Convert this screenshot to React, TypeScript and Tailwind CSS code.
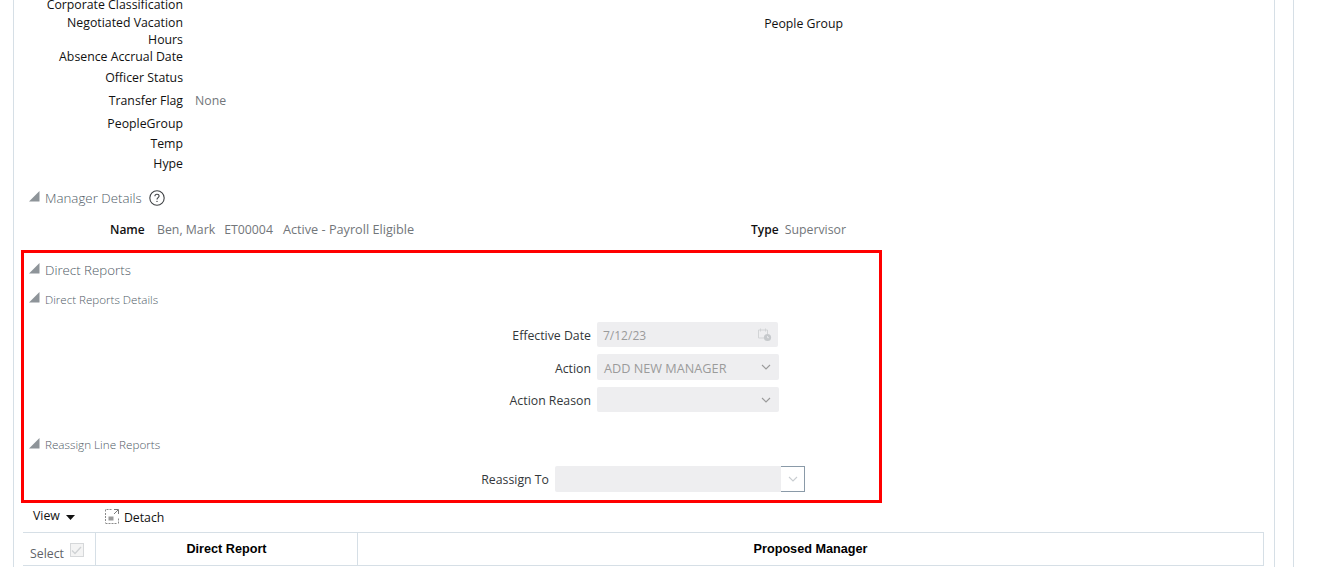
import React from "react";

const font = { fontFamily: '"Open Sans", "Noto Sans", sans-serif' };

function Tri() {
  return (
    <svg width="11" height="11" viewBox="0 0 11 11" className="shrink-0">
      <polygon points="0,10.5 10.5,10.5 10.5,0" fill="#8e9499" />
    </svg>
  );
}

function Chevron({ color = "#9a9a9a" }: { color?: string }) {
  return (
    <svg width="10" height="6" viewBox="0 0 10 6" fill="none">
      <path d="M1 1l4 4 4-4" stroke={color} strokeWidth="1.1" />
    </svg>
  );
}

function FormRow({ label, value, h, extra = "" }: { label: string; value?: string; h: string; extra?: string }) {
  return (
    <div className={`flex items-center ${h} ${extra}`}>
      <div className="w-[169px] text-right text-[12.3px] leading-[17px] text-[#111]">{label}</div>
      {value && <div className="ml-3 pt-[1px] text-[12.3px] text-[#72767a]">{value}</div>}
    </div>
  );
}

function Header({ title, size }: { title: string; size: string }) {
  return (
    <div className="flex items-center gap-[5px] pl-[5px]">
      <div className="-mt-[4px]"><Tri /></div>
      <span className={`${size} font-light text-[#4f5b66]`}>{title}</span>
    </div>
  );
}

function FieldLabel({ children }: { children: React.ReactNode }) {
  return <div className="pt-[3px] text-right text-[12.3px] text-[#33373a]">{children}</div>;
}

export default function App() {
  return (
    <div style={font} className="flex h-[567px] overflow-hidden bg-white pl-[13px]">
      <div className="h-full w-[1262px] shrink-0 border-x border-[#d6dfe6]">
        <div className="-mt-[5px] flex">
          <div className="w-[750px]">
            <FormRow label="Corporate Classification" h="h-[18px]" />
            <div className="flex h-[35px] items-center pt-[1px]">
              <div className="w-[169px] text-right text-[12.3px] leading-[17px] text-[#111]">
                Negotiated Vacation
                <br />
                Hours
              </div>
            </div>
            <FormRow label="Absence Accrual Date" h="h-[17px]" />
            <FormRow label="Officer Status" h="h-[24px]" />
            <FormRow label="Transfer Flag" value="None" h="h-[23px]" />
            <FormRow label="PeopleGroup" h="h-[21px]" extra="pt-[2px]" />
            <FormRow label="Temp" h="h-[20px]" />
            <FormRow label="Hype" h="h-[20px]" />
          </div>
          <div className="mt-[20px] flex h-[18px] w-[79px] items-center justify-end self-start whitespace-nowrap text-[12.3px] text-[#111]">
            People Group
          </div>
        </div>

        <div className="mt-[15px] flex h-[20px] items-center gap-[5px] pl-[15px]">
          <div className="-mt-[3px]"><Tri /></div>
          <span className="pt-[2px] text-[13.3px] font-light text-[#4f5b66]">Manager Details</span>
          <svg width="16" height="16" viewBox="0 0 16 16" fill="none" className="ml-[2px] -mt-[1px]">
            <circle cx="8" cy="8" r="7.2" stroke="#3f4245" strokeWidth="1.1" />
            <path d="M5.9 6.2c0-1.3 1-2 2.1-2s2.1.7 2.1 1.9c0 1.5-2.1 1.6-2.1 3.3" stroke="#3f4245" strokeWidth="1.1" />
            <circle cx="8" cy="11.4" r=".7" fill="#3f4245" />
          </svg>
        </div>

        <div className="mt-[13px] flex h-[18px] items-center text-[12.3px]">
          <span className="ml-[96px] w-[47px] text-[12px] font-semibold text-[#111]">Name</span>
          <span className="text-[#72767a]">Ben, Mark</span>
          <span className="ml-[9px] text-[#72767a]">ET00004</span>
          <span className="ml-[10px] text-[12.7px] text-[#72767a]">Active - Payroll Eligible</span>
          <span className="ml-[337px] text-[12px] font-semibold text-[#111]">Type</span>
          <span className="ml-[6px] text-[#72767a]">Supervisor</span>
        </div>

        <div className="ml-[7px] mt-[11px] h-[253px] w-[861px] border-[3px] border-[#ff0000]">
          <div className="pt-[8px]">
            <Header title="Direct Reports" size="text-[13.3px]" />
          </div>
          <div className="mt-[10px]"><Header title="Direct Reports Details" size="text-[11.6px]" /></div>

          <div className="mt-[14px] grid grid-cols-[567px_181px] items-center gap-x-[6px]">
            <FieldLabel>Effective Date</FieldLabel>
            <div className="flex h-[25px] w-[181px] items-center justify-between rounded-[2px] bg-[#eeeef0] pl-[6px] pr-[6px]">
              <span className="pt-[3px] text-[12px] text-[#9b9b9b]">7/12/23</span>
              <svg width="15" height="15" viewBox="0 0 15 15" fill="none">
                <path d="M1.5 3h9v8h-9z M3.5 1.5v3 M8.5 1.5v3" stroke="#d2d4d6" strokeWidth="1" />
                <circle cx="10.5" cy="10.5" r="3.6" fill="#c6c9cc" />
                <path d="M10.5 9v1.7h1.5" stroke="#eeeef0" strokeWidth=".8" />
              </svg>
            </div>
            <div className="mt-[7px]"><FieldLabel>Action</FieldLabel></div>
            <div className="mt-[7px] flex h-[26px] w-[182px] items-center justify-between rounded-[2px] bg-[#eeeef0] pl-[7px] pr-[8px]">
              <span className="pt-[3px] text-[12.7px] text-[#9b9b9b]">ADD NEW MANAGER</span>
              <Chevron />
            </div>
            <div className="mt-[7px]"><FieldLabel>Action Reason</FieldLabel></div>
            <div className="mt-[7px] flex h-[25px] w-[182px] items-center justify-end rounded-[2px] bg-[#eeeef0] pr-[8px]">
              <Chevron />
            </div>
          </div>

          <div className="mt-[24px]"><Header title="Reassign Line Reports" size="text-[11.7px]" /></div>

          <div className="mt-[12px] flex items-center">
            <div className="-mt-[1px] w-[525px]"><FieldLabel>Reassign To</FieldLabel></div>
            <div className="ml-[6px] h-[26px] w-[226px] rounded-l-[2px] bg-[#eeeef0]" />
            <div className="flex h-[26px] w-[24px] items-center justify-center border border-l-0 border-[#8a9aa8] bg-white">
              <Chevron color="#c9cdd1" />
            </div>
          </div>
        </div>

        <div className="ml-[9px] mt-[3px] flex h-[26px] items-center text-[12.3px] text-[#111]">
          <div className="-mt-[6px] ml-[10px] flex items-center gap-[6px]">
            <span>View</span>
            <svg width="9" height="5" viewBox="0 0 9 5" className="mt-[2px]"><polygon points="0,0 9,0 4.5,5" fill="#111" /></svg>
          </div>
          <svg width="14" height="15" viewBox="0 0 14 15" fill="none" className="-mt-[5px] ml-[30px]">
            <path d="M.5 2.5v-2h7 M.5 4v9.5 M.5 14.5h12 M13.5 14.5V9" stroke="#8b8b8b" strokeWidth="1" strokeDasharray="2 1" />
            <path d="M9 .5h4.5V5 M13 1l-4 4" stroke="#7a7a7a" strokeWidth="1" />
            <path d="M3.5 7.5h5v4h-5z" fill="#9a9a9a" />
          </svg>
          <span className="-mt-[2px] ml-[5px]">Detach</span>
        </div>

        <div className="ml-[9px] flex h-[34px] w-[1241px] border-y border-r border-[#d6dfe6]">
          <div className="flex w-[73px] shrink-0 items-center gap-[6px] border-r border-[#d6dfe6] pl-[7px] pt-[10px] text-[#5f6368]">
            <span className="text-[12.3px]">Select</span>
            <div className="-mt-[8px] flex h-[14px] w-[14px] items-center justify-center border border-[#d6d8da] bg-[#f4f4f4]">
              <svg width="11" height="9" viewBox="0 0 11 9" fill="none">
                <path d="M1 4.5l3 3 6-6.5" stroke="#cfd2d4" strokeWidth="1.3" />
              </svg>
            </div>
          </div>
          <div style={{ fontFamily: '"Liberation Sans", sans-serif' }} className="flex w-[262px] shrink-0 items-center justify-center border-r border-[#d6dfe6] text-[12.65px] font-semibold text-black">
            Direct Report
          </div>
          <div style={{ fontFamily: '"Liberation Sans", sans-serif' }} className="flex flex-1 items-center justify-center text-[12.65px] font-semibold text-black">
            Proposed Manager
          </div>
        </div>
      </div>
      <div className="ml-[18px] h-full w-px shrink-0 bg-[#d6dfe6]" />
    </div>
  );
}
